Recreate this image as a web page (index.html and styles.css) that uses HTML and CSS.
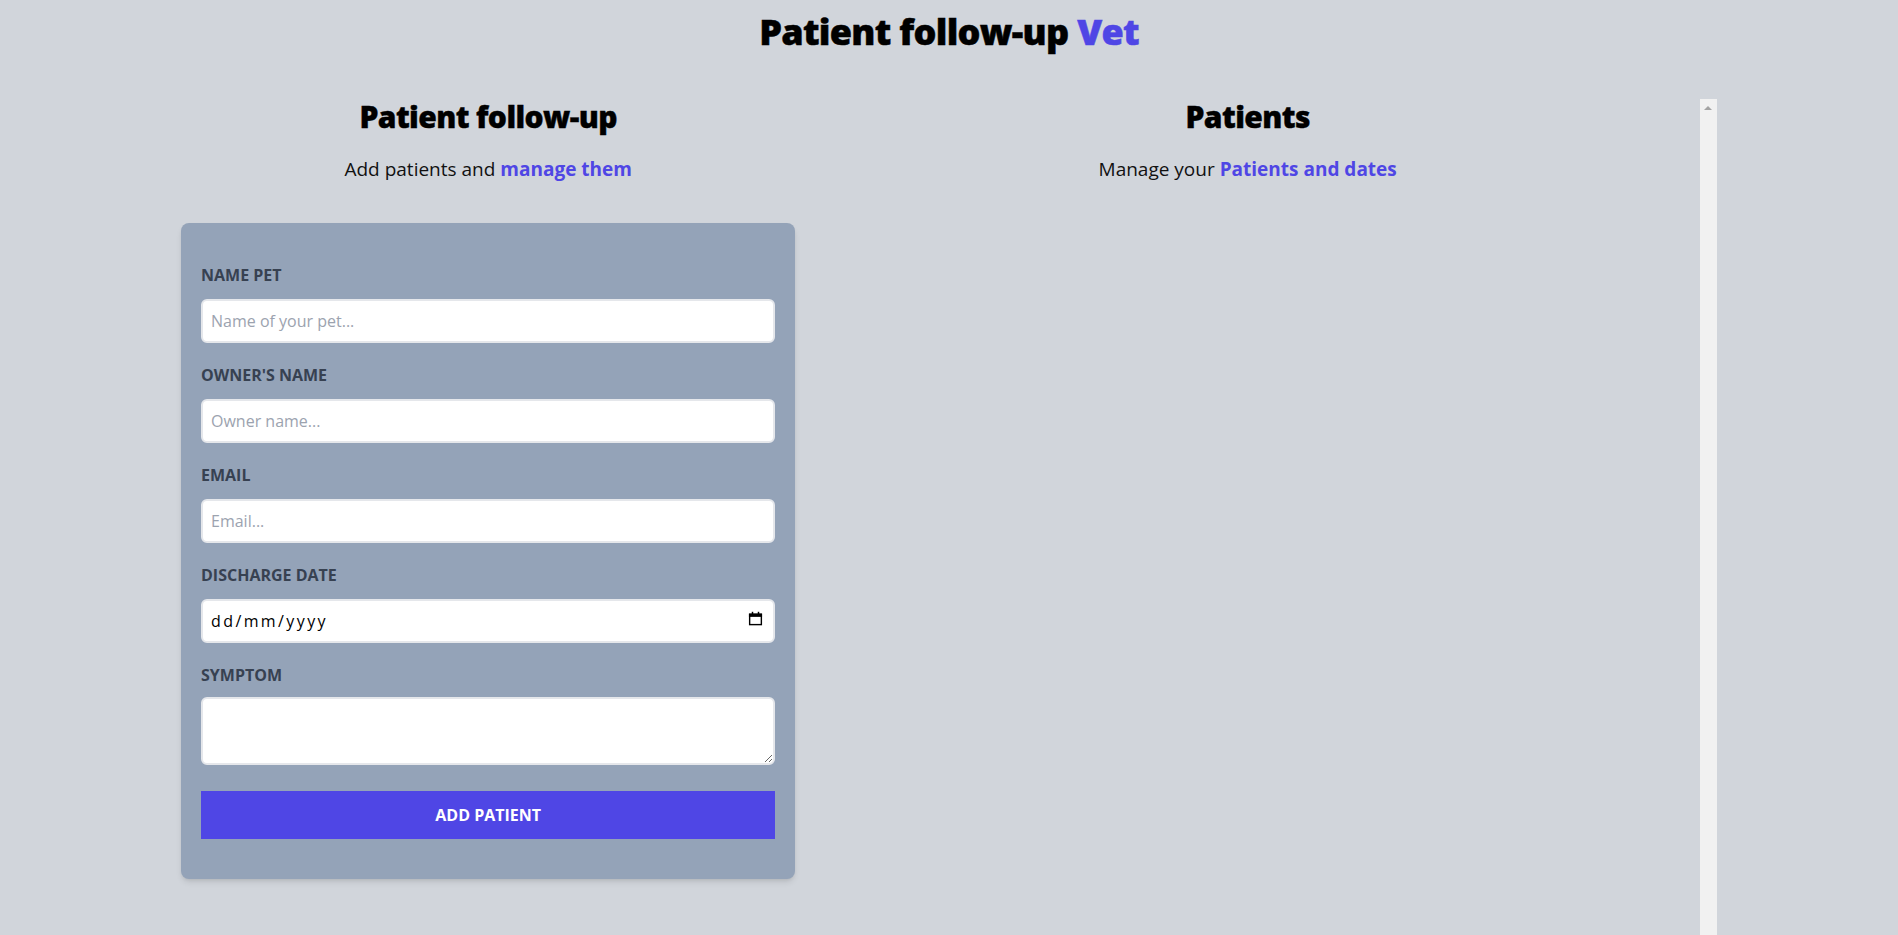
FILE: index.html
```html
<!DOCTYPE html>
<html lang="en">
<head>
<meta charset="utf-8">
<title>Patient follow-up Vet</title>
<link rel="stylesheet" href="styles.css">
</head>
<body>
<div class="page">
  <header class="header">
    <h1 class="title">Patient follow-up <span class="accent">Vet</span></h1>
  </header>
  <main class="columns">
    <section class="form-col">
      <h2 class="col-title">Patient follow-up</h2>
      <p class="col-sub">Add patients and <span class="accent-bold">manage them</span></p>
      <form class="card">
        <div class="field">
          <label class="label" for="pet">NAME PET</label>
          <input id="pet" class="input" type="text" placeholder="Name of your pet...">
        </div>
        <div class="field">
          <label class="label" for="owner">OWNER'S NAME</label>
          <input id="owner" class="input" type="text" placeholder="Owner name...">
        </div>
        <div class="field">
          <label class="label" for="email">EMAIL</label>
          <input id="email" class="input" type="email" placeholder="Email...">
        </div>
        <div class="field">
          <label class="label" for="date">DISCHARGE DATE</label>
          <div class="date-wrap">
            <input id="date" class="input input-date" type="text" placeholder="dd/mm/yyyy">
            <svg class="cal-icon" viewBox="0 0 16 16" width="15" height="15" aria-hidden="true">
              <rect x="1.75" y="3.25" width="12.5" height="11" fill="none" stroke="#000" stroke-width="1.5"/>
              <rect x="1" y="2.5" width="14" height="3.5" fill="#000"/>
              <rect x="4" y="0.5" width="1.6" height="3" fill="#000"/>
              <rect x="10.4" y="0.5" width="1.6" height="3" fill="#000"/>
            </svg>
          </div>
        </div>
        <div class="field field-last">
          <label class="label" for="symptom">SYMPTOM</label>
          <textarea id="symptom" class="input textarea" rows="2"></textarea>
        </div>
        <button class="submit" type="button">ADD PATIENT</button>
      </form>
    </section>
    <section class="list-col">
      <div class="list-content">
        <h2 class="col-title">Patients</h2>
        <p class="col-sub">Manage your <span class="accent-bold">Patients and dates</span></p>
      </div>
      <div class="scroll-track" aria-hidden="true">
        <div class="scroll-arrow"></div>
      </div>
    </section>
  </main>
</div>
</body>
</html>
```

FILE: styles.css
```css
* {
  box-sizing: border-box;
}

html,
body {
  margin: 0;
  height: 100%;
}

body {
  background: #d1d5db;
  font-family: "Open Sans", "Noto Sans", sans-serif;
  color: #111827;
  overflow: hidden;
}

.page {
  height: 100vh;
  max-width: 1536px;
  margin: 0 auto;
  display: flex;
  flex-direction: column;
}

.title {
  margin: 12px 0 0;
  font-size: 36px;
  line-height: 40px;
  font-weight: 800;
  letter-spacing: -0.7px;
  -webkit-text-stroke: 0.5px currentColor;
  text-align: center;
  color: #000;
}

.accent {
  color: #4f46e5;
}

.columns {
  flex: 1;
  min-height: 0;
  display: flex;
  margin-top: 47px;
}

.form-col {
  flex: 0 0 40%;
}

.list-col {
  flex: 0 0 60%;
  display: flex;
  min-height: 0;
}

.list-content {
  flex: 1;
  min-width: 0;
}

.scroll-track {
  flex: 0 0 17px;
  background: #f1f1f1;
  padding-top: 7px;
}

.scroll-arrow {
  width: 0;
  height: 0;
  margin: 0 auto;
  border-left: 4px solid transparent;
  border-right: 4px solid transparent;
  border-bottom: 4px solid #a3a3a3;
}

.col-title {
  margin: 0;
  font-size: 30px;
  line-height: 36px;
  font-weight: 800;
  letter-spacing: -0.6px;
  -webkit-text-stroke: 0.4px currentColor;
  text-align: center;
  color: #000;
}

.col-sub {
  margin: 20px 0 40px;
  font-size: 19px;
  line-height: 28px;
  text-align: center;
  color: #111;
}

.accent-bold {
  color: #4f46e5;
  font-weight: 700;
}

.card {
  background: #94a3b8;
  border-radius: 8px;
  box-shadow: 0 4px 6px -1px rgba(0, 0, 0, 0.1), 0 2px 4px -2px rgba(0, 0, 0, 0.1);
  padding: 40px 20px;
  margin-bottom: 40px;
}

.field {
  display: flex;
  flex-direction: column;
  margin-bottom: 20px;
}

.field-last {
  margin-bottom: 26px;
}

.label {
  font-size: 16px;
  line-height: 24px;
  font-weight: 700;
  color: #374151;
}

.input {
  display: block;
  margin-top: 12px;
  width: 100%;
  border: 2px solid #e5e7eb;
  border-radius: 6px;
  padding: 8px;
  font-family: inherit;
  font-size: 16px;
  line-height: 24px;
  background: #fff;
  color: #000;
  outline: none;
}

.input::placeholder {
  color: #9ca3af;
}

.date-wrap {
  position: relative;
}

.input-date {
  height: 44px;
}

.input-date::placeholder {
  color: #000;
  letter-spacing: 2.4px;
}

.cal-icon {
  position: absolute;
  right: 12px;
  top: 50%;
  transform: translateY(-25%);
}

.textarea {
  margin-top: 10px;
  height: 68px;
  resize: vertical;
}

.submit {
  display: block;
  width: 100%;
  border: 0;
  padding: 12px;
  background: #4f46e5;
  color: #fff;
  font-family: inherit;
  font-size: 16px;
  line-height: 24px;
  font-weight: 700;
  cursor: pointer;
}
```
